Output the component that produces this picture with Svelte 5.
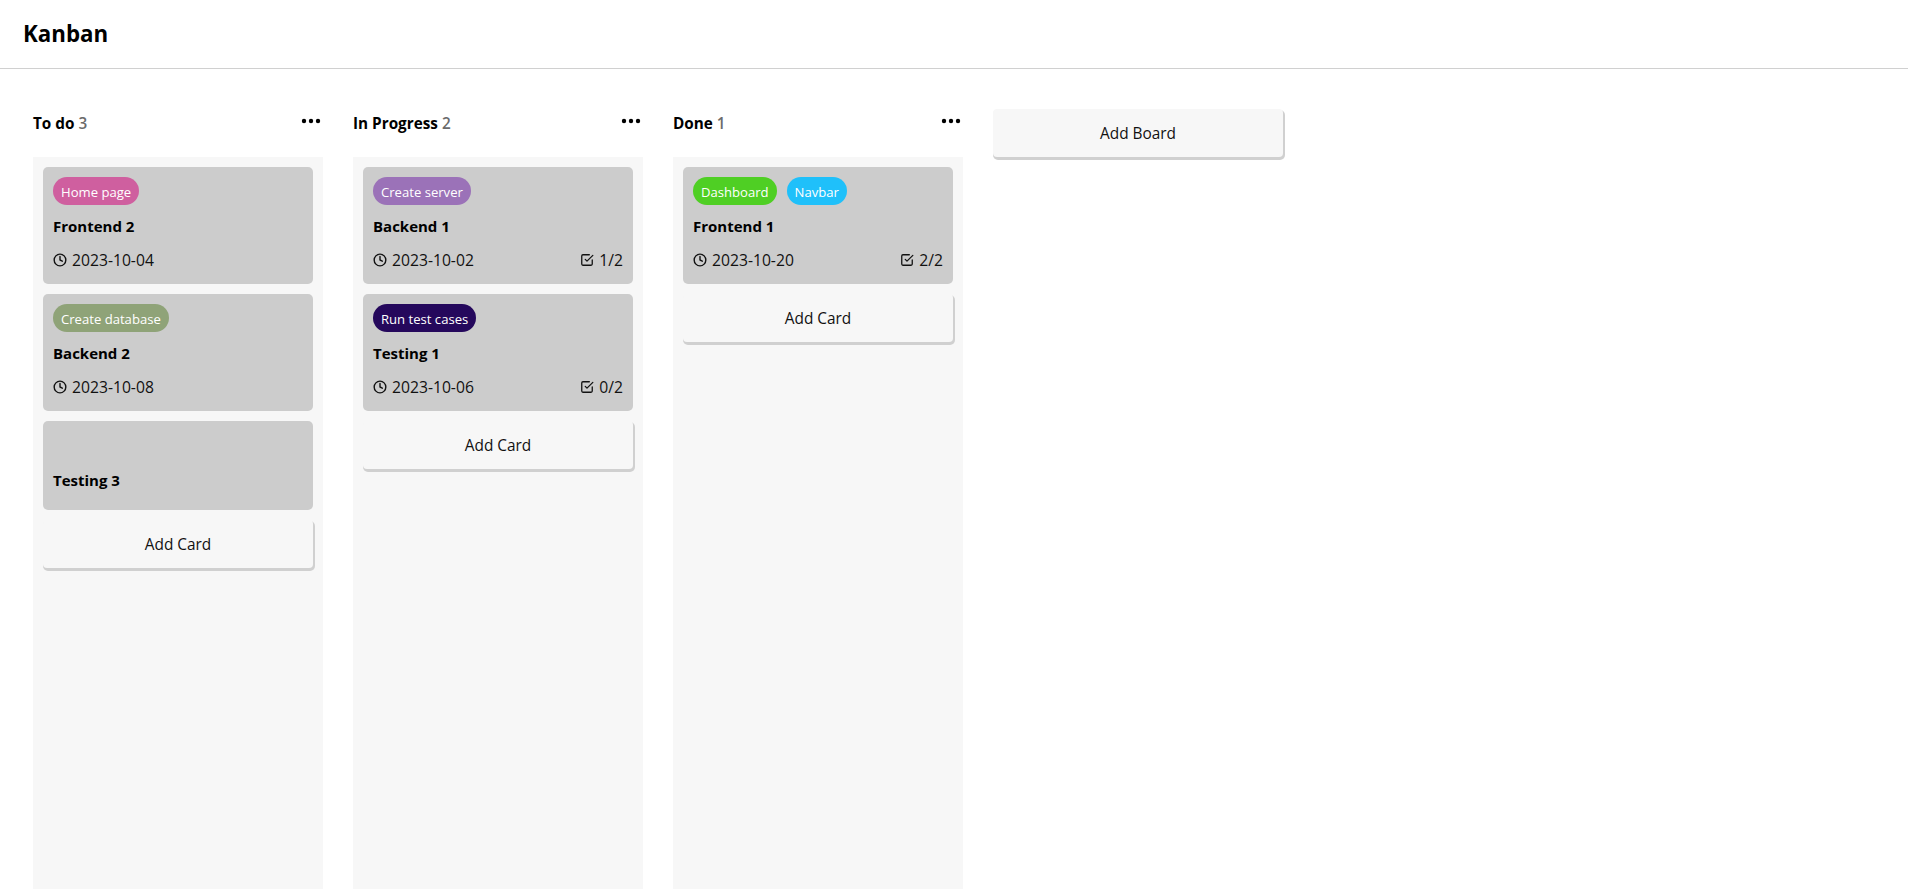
<script>
  const boards = [
    { title: 'To do', count: 3, cards: [
      { labels: [['Home page', '#cf5f9f']], title: 'Frontend 2', date: '2023-10-04' },
      { labels: [['Create database', '#8fa378']], title: 'Backend 2', date: '2023-10-08' },
      { labels: [], title: 'Testing 3' }
    ]},
    { title: 'In Progress', count: 2, cards: [
      { labels: [['Create server', '#9b72b8']], title: 'Backend 1', date: '2023-10-02', tasks: '1/2' },
      { labels: [['Run test cases', '#25085c']], title: 'Testing 1', date: '2023-10-06', tasks: '0/2' }
    ]},
    { title: 'Done', count: 1, cards: [
      { labels: [['Dashboard', '#4fcf24'], ['Navbar', '#1fc0fa']], title: 'Frontend 1', date: '2023-10-20', tasks: '2/2' }
    ]}
  ];
</script>

<div class="app">
  <header class="nav"><h1>Kanban</h1></header>
  <main class="outer">
    <div class="inner">
      {#each boards as b}
        <section class="board">
          <div class="top">
            <p class="title">{b.title} <span>{b.count}</span></p>
            <svg class="more" viewBox="0 0 24 24" width="24" height="24"><circle cx="5" cy="12" r="2.2"/><circle cx="12" cy="12" r="2.2"/><circle cx="19" cy="12" r="2.2"/></svg>
          </div>
          <div class="cards">
            {#each b.cards as c}
              <article class="card">
                <div class="labels">
                  {#each c.labels as l}
                    <span class="label" style="background:{l[1]}">{l[0]}</span>
                  {/each}
                </div>
                <p class="ctitle">{c.title}</p>
                <div class="foot">
                  {#if c.date}
                    <span class="meta">
                      <svg viewBox="0 0 24 24" width="14" height="14" fill="none" stroke="currentColor" stroke-width="2.4" stroke-linecap="round" stroke-linejoin="round"><circle cx="12" cy="12" r="10"/><path d="M12 6v6l4 2"/></svg>
                      {c.date}
                    </span>
                  {/if}
                  {#if c.tasks}
                    <span class="meta">
                      <svg viewBox="0 0 24 24" width="14" height="14" fill="none" stroke="currentColor" stroke-width="2.2" stroke-linecap="round" stroke-linejoin="round"><path d="M9 11l3 3L22 4"/><path d="M21 12v7a2 2 0 0 1-2 2H5a2 2 0 0 1-2-2V5a2 2 0 0 1 2-2h11"/></svg>
                      {c.tasks}
                    </span>
                  {/if}
                </div>
              </article>
            {/each}
            <button class="add">Add Card</button>
          </div>
        </section>
      {/each}
      <div class="addboard"><button class="add">Add Board</button></div>
    </div>
  </main>
</div>

<style>
  :global(body) { margin: 0; font-family: "Open Sans", "Noto Sans", sans-serif; background: #fff; overflow: hidden; }
  .app { height: 889px; display: flex; flex-direction: column; }
  .nav { height: 68px; border-bottom: 1px solid #d0d0d0; display: flex; align-items: center; padding: 0 23px; box-sizing: content-box; }
  h1 { margin: 0 0 2px; font-size: 22.3px; font-weight: 700; color: #000; }
  .outer { flex: 1; min-height: 0; }
  .inner { display: flex; gap: 30px; padding: 40px 33px 0; height: 100%; box-sizing: border-box; align-items: stretch; }
  .board { width: 290px; display: flex; flex-direction: column; }
  .top { height: 48px; flex: none; display: flex; justify-content: space-between; align-items: flex-start; }
  .title { margin: 4px 0 0; font-size: 15.3px; line-height: 21px; font-weight: 700; color: #000; }
  .title span { color: #6b6b6b; font-weight: 600; }
  .more { fill: #000; }
  .cards { flex: 1; background: #f7f7f7; padding: 10px; display: flex; flex-direction: column; gap: 10px; }
  .card { background: #ccc; border-radius: 5px; padding: 10px; display: flex; flex-direction: column; gap: 10px; }
  .labels { display: flex; gap: 10px; height: 28px; }
  .label { height: 28px; padding: 0 8px; border-radius: 14px; color: #fff; font-size: 13.1px; line-height: 30px; white-space: nowrap; }
  .ctitle { margin: 0 0 -2px; font-size: 15px; font-weight: 700; color: #000; line-height: 23px; }
  .foot { display: flex; justify-content: space-between; align-items: center; font-size: 15.7px; color: #111; line-height: 28px; }
  .meta { display: inline-flex; align-items: center; gap: 5px; }
  .add { width: 100%; height: 48px; background: #f7f7f7; border: 0; border-radius: 4px; box-shadow: 1px 2px 0 1px #d0d0d0; font: 15.4px "Open Sans", sans-serif; color: #111; }
  .addboard { width: 290px; }
</style>
